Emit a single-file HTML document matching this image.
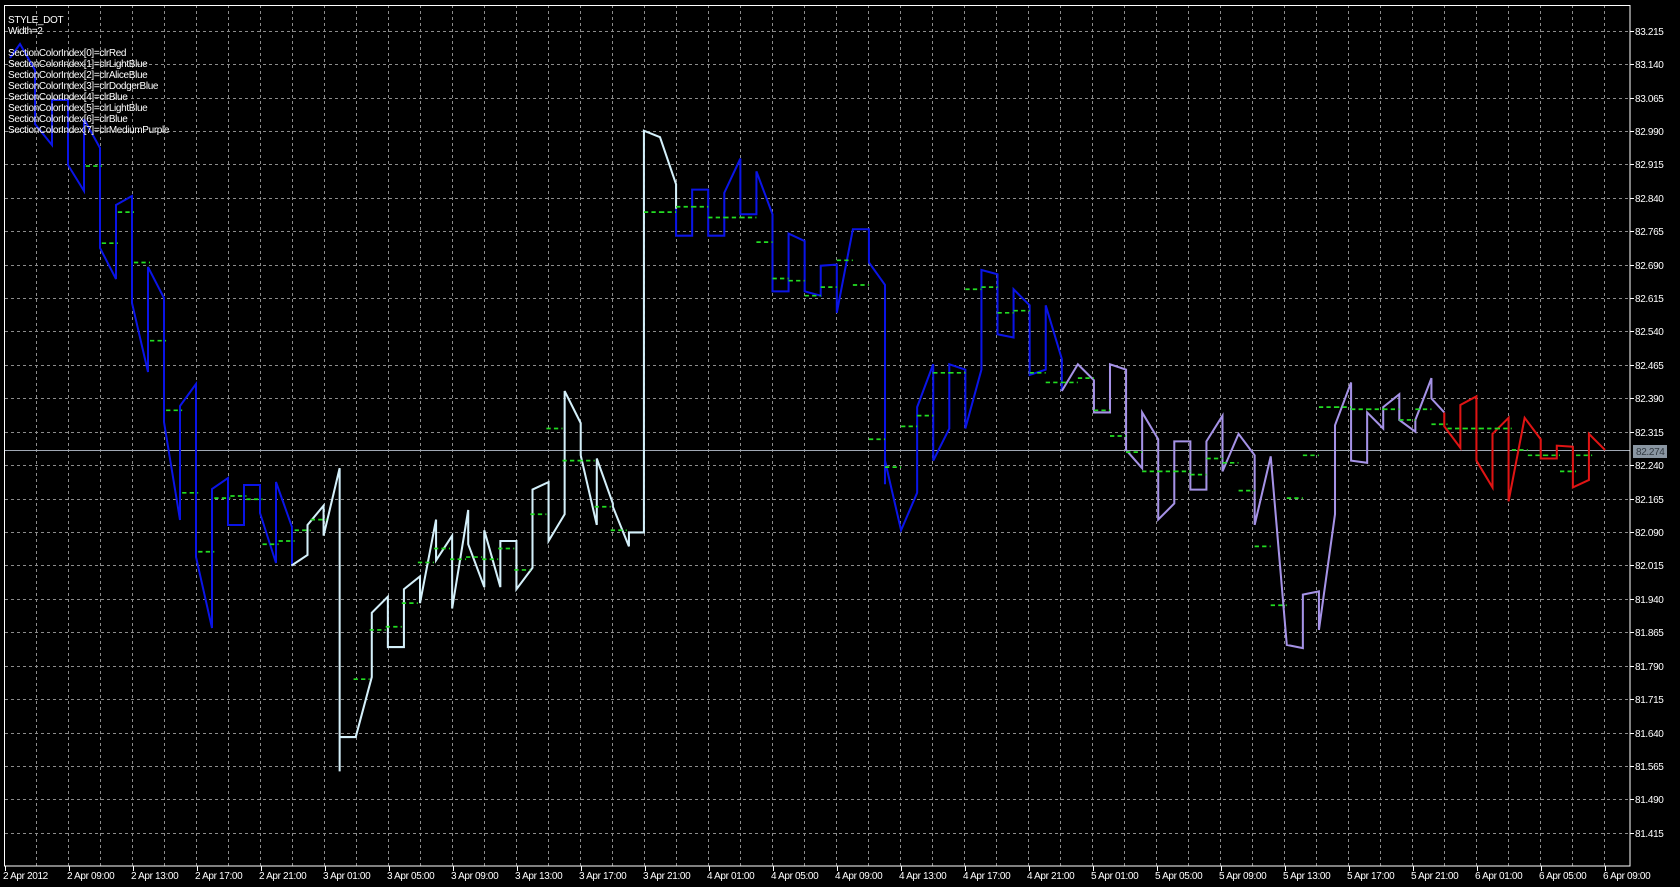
<!DOCTYPE html>
<html><head><meta charset="utf-8"><style>
html,body{margin:0;padding:0;background:#000;width:1680px;height:887px;overflow:hidden}
svg{display:block}
text{font-family:"Liberation Sans",sans-serif;font-size:10px;fill:#fff;letter-spacing:-0.35px}
</style></head><body>
<svg width="1680" height="887" viewBox="0 0 1680 887" xmlns="http://www.w3.org/2000/svg">
<rect width="1680" height="887" fill="#000"/>
<g stroke="#8c8c8c" stroke-width="1" stroke-dasharray="3,3" id="grid"></g>
<script>
(function(){
var ns="http://www.w3.org/2000/svg",g=document.getElementById('grid');
for(var k=0;k<25;k++){var y=Math.round(30.7+33.42*k)+0.5;var l=document.createElementNS(ns,'line');l.setAttribute('x1',5);l.setAttribute('x2',1630);l.setAttribute('y1',y);l.setAttribute('y2',y);g.appendChild(l);}
for(var x=36;x<1630;x+=32){var l=document.createElementNS(ns,'line');l.setAttribute('x1',x+0.5);l.setAttribute('x2',x+0.5);l.setAttribute('y1',5);l.setAttribute('y2',866);g.appendChild(l);}
})();
</script>
<line x1="5" y1="450.5" x2="1630" y2="450.5" stroke="#a0a8b4" stroke-width="1"/>
<polyline fill="none" stroke="#0a14e6" stroke-width="2" points="10,58 20,44 35,70 35,124 52,145 52,100 68,100 68,165 84,191 84,119 100,148 100,248 116,279 116,205 132,196 132,303 148,372 148,267 164,298 164,422 180,520 180,406 196,384 196,557 212,628 212,489 228,478 228,525 244,525 244,485 260,485 260,513 276,563 276,482 292,527 292,566"/>
<g transform="scale(1.07143,1.0713)" fill="none" stroke-width="1.9">
<polyline stroke="#d4f0fa" points="272,528 287,518 287,490 302,472 302,500 317,437 317,720 317,688 332,688 347,632 347,572 362,557 362,604 377,604 377,550 392,538 392,563 407,485 407,523 422,500 422,568 437,476 437,508 452,548 452,495 467,548 467,505 482,505 482,550 497,530 497,457 512,450 512,505 527,480 527,365 542,395 542,425 557,490 557,428 572,470 572,473 587,510 587,497 601,497 601,122 616,128 631,172 631,195"/>
<polyline stroke="#0a14e6" points="631,195 631,220 646,220 646,177 661,177 661,220 676,220 676,180 691,148 691,200 706,200 706,160 721,200 721,272 736,272 736,218 751,225 751,272 766,276 766,248 781,247 781,292 796,214 811,214 811,245 826,266 826,452 826,430 841,495 856,460 856,380 871,340 871,430 886,400 886,340 901,345 901,400 916,345 916,252 931,256 931,312 946,315 946,270 961,285 961,350 976,345 976,285 991,335 991,365"/>
<polyline stroke="#a592e6" points="991,365 1006,340 1021,355 1021,385 1036,385 1036,340 1051,345 1051,420 1066,437 1066,385 1081,410 1081,485 1096,470 1096,412 1111,412 1111,457 1126,457 1126,412 1141,388 1141,440 1156,405 1171,425 1171,490 1186,426 1201,602 1216,605 1216,555 1231,552 1231,588 1246,480 1246,397 1261,357 1261,430 1276,432 1276,385 1291,400 1291,380 1306,368 1306,392 1321,403 1321,392 1336,353 1336,372 1348,385"/>
<polyline stroke="#e01414" points="1348,385 1348,398 1363,418 1363,378 1378,370 1378,430 1393,455 1393,405 1408,390 1408,468 1423,390 1438,410 1438,428 1453,428 1453,416 1468,417 1468,455 1483,448 1483,405 1498,420"/>
<g stroke="#22dd22" stroke-width="1.6" stroke-dasharray="4,3">
<path d="M80 155h15M95 227h15M110 198h15M125 245h15M140 318h15M155 383h15M170 460h15M185 515h15M200 465h15M215 463h15M230 466h15M245 508h15M260 505h15M275 495h15M290 485h15M330 634h15M345 588h15M360 585h15M375 563h15M390 525h15M405 512h15M420 522h15M435 520h15M450 522h15M465 512h15M480 532h15M495 480h15M510 400h15M525 430h15M540 430h15M555 473h15M570 495h15M601 198h15M616 198h15M631 193h15M646 193h15M661 203h15M676 203h15M691 203h15M706 226h15M721 260h15M736 262h15M751 276h15M766 268h15M781 243h15M796 266h15M811 410h15M826 436h15M841 398h15M856 388h15M871 348h15M886 348h15M901 270h15M916 268h15M931 292h15M946 290h15M961 348h15M976 357h15M991 357h15M1006 353h15M1021 383h15M1036 407h15M1051 422h15M1066 440h15M1081 440h15M1096 440h15M1111 443h15M1126 428h15M1141 432h15M1156 458h15M1171 510h15M1186 565h15M1201 465h15M1216 425h15M1231 380h15M1246 380h15M1261 382h15M1276 382h15M1291 382h15M1306 392h15M1321 382h15M1336 396h15M1351 400h15M1366 400h15M1381 400h15M1396 400h15M1411 420h15M1426 425h15M1441 425h15M1456 440h15M1471 425h15"/>
</g>
</g>
<rect x="4.5" y="5.5" width="1625.5" height="860.5" fill="none" stroke="#fff" stroke-width="1"/>
<g stroke="#fff" stroke-width="1">
<path d="M1630 31.5h4M1630 64.5h4M1630 98.5h4M1630 131.5h4M1630 164.5h4M1630 198.5h4M1630 231.5h4M1630 265.5h4M1630 298.5h4M1630 331.5h4M1630 365.5h4M1630 398.5h4M1630 432.5h4M1630 465.5h4M1630 499.5h4M1630 532.5h4M1630 565.5h4M1630 599.5h4M1630 632.5h4M1630 666.5h4M1630 699.5h4M1630 733.5h4M1630 766.5h4M1630 799.5h4M1630 833.5h4"/>
<path d="M5.5 866v5M69.5 866v5M133.5 866v5M197.5 866v5M261.5 866v5M325.5 866v5M389.5 866v5M453.5 866v5M517.5 866v5M581.5 866v5M645.5 866v5M709.5 866v5M773.5 866v5M837.5 866v5M901.5 866v5M965.5 866v5M1029.5 866v5M1093.5 866v5M1157.5 866v5M1221.5 866v5M1285.5 866v5M1349.5 866v5M1413.5 866v5M1477.5 866v5M1541.5 866v5M1605.5 866v5"/>
</g>
<g>
<text x="1635" y="35">83.215</text><text x="1635" y="68">83.140</text><text x="1635" y="102">83.065</text><text x="1635" y="135">82.990</text><text x="1635" y="168">82.915</text><text x="1635" y="202">82.840</text><text x="1635" y="235">82.765</text><text x="1635" y="269">82.690</text><text x="1635" y="302">82.615</text><text x="1635" y="335">82.540</text><text x="1635" y="369">82.465</text><text x="1635" y="402">82.390</text><text x="1635" y="436">82.315</text><text x="1635" y="469">82.240</text><text x="1635" y="503">82.165</text><text x="1635" y="536">82.090</text><text x="1635" y="569">82.015</text><text x="1635" y="603">81.940</text><text x="1635" y="636">81.865</text><text x="1635" y="670">81.790</text><text x="1635" y="703">81.715</text><text x="1635" y="737">81.640</text><text x="1635" y="770">81.565</text><text x="1635" y="803">81.490</text><text x="1635" y="837">81.415</text>
</g>
<g>
<text x="3" y="879">2 Apr 2012</text><text x="67" y="879">2 Apr 09:00</text><text x="131" y="879">2 Apr 13:00</text><text x="195" y="879">2 Apr 17:00</text><text x="259" y="879">2 Apr 21:00</text><text x="323" y="879">3 Apr 01:00</text><text x="387" y="879">3 Apr 05:00</text><text x="451" y="879">3 Apr 09:00</text><text x="515" y="879">3 Apr 13:00</text><text x="579" y="879">3 Apr 17:00</text><text x="643" y="879">3 Apr 21:00</text><text x="707" y="879">4 Apr 01:00</text><text x="771" y="879">4 Apr 05:00</text><text x="835" y="879">4 Apr 09:00</text><text x="899" y="879">4 Apr 13:00</text><text x="963" y="879">4 Apr 17:00</text><text x="1027" y="879">4 Apr 21:00</text><text x="1091" y="879">5 Apr 01:00</text><text x="1155" y="879">5 Apr 05:00</text><text x="1219" y="879">5 Apr 09:00</text><text x="1283" y="879">5 Apr 13:00</text><text x="1347" y="879">5 Apr 17:00</text><text x="1411" y="879">5 Apr 21:00</text><text x="1475" y="879">6 Apr 01:00</text><text x="1539" y="879">6 Apr 05:00</text><text x="1603" y="879">6 Apr 09:00</text>
</g>
<rect x="1633" y="445" width="34" height="13" fill="#8a96a2"/>
<text x="1636" y="455" style="fill:#303840">82.274</text>
<text x="8" y="23">STYLE_DOT</text>
<text x="8" y="34">Width=2</text>
<text x="8" y="56">SectionColorIndex[0]=clrRed</text>
<text x="8" y="67">SectionColorIndex[1]=clrLightBlue</text>
<text x="8" y="78">SectionColorIndex[2]=clrAliceBlue</text>
<text x="8" y="89">SectionColorIndex[3]=clrDodgerBlue</text>
<text x="8" y="100">SectionColorIndex[4]=clrBlue</text>
<text x="8" y="111">SectionColorIndex[5]=clrLightBlue</text>
<text x="8" y="122">SectionColorIndex[6]=clrBlue</text>
<text x="8" y="133">SectionColorIndex[7]=clrMediumPurple</text>
</svg>
</body></html>
